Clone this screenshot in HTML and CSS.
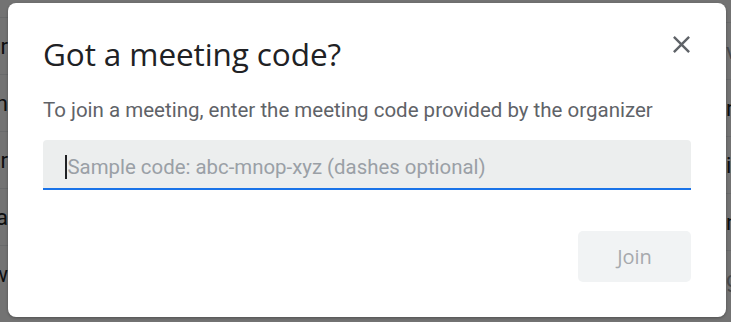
FILE: index.html
```html
<!DOCTYPE html>
<html>
<head>
<meta charset="utf-8">
<link rel="stylesheet" href="styles.css">
</head>
<body>
<div class="page">
  <div class="bg-col left">
    <div class="row">r</div>
    <div class="row">n</div>
    <div class="row">r</div>
    <div class="row">ta</div>
    <div class="row">w</div>
  </div>
  <div class="bg-col right">
    <div class="row faint">v</div>
    <div class="row">r</div>
    <div class="row">i</div>
    <div class="row">n</div>
    <div class="row faint">g</div>
  </div>
  <div class="overlay"></div>
  <div class="dialog">
    <div class="head">
      <h1 class="title">Got a meeting code?</h1>
      <button class="close" aria-label="Close">
        <svg width="24" height="24" viewBox="0 0 24 24"><path d="M19 6.41 17.59 5 12 10.59 6.41 5 5 6.41 10.59 12 5 17.59 6.41 19 12 13.41 17.59 19 19 17.59 13.41 12z" fill="#5f6368"/></svg>
      </button>
    </div>
    <p class="desc">To join a meeting, enter the meeting code provided by the organizer</p>
    <div class="field"><span class="caret"></span><span class="placeholder">Sample code: abc-mnop-xyz (dashes optional)</span></div>
    <div class="actions"><button class="join">Join</button></div>
  </div>
</div>
</body>
</html>
```
FILE: styles.css
```css
* { box-sizing: border-box; }
html, body { margin: 0; padding: 0; }
body { width: 731px; height: 322px; overflow: hidden; font-family: Roboto, "Liberation Sans", sans-serif; }
.page { position: relative; width: 731px; height: 322px; background: #ffffff; }
.bg-col { position: absolute; top: 0; display: flex; flex-direction: column; padding-top: 17px; font-size: 22px; color: #202124; }
.bg-col.left { left: -40px; width: 48px; text-align: right; }
.bg-col.right { left: 726px; width: 60px; padding-top: 22px; }
.bg-col .row { height: 57px; line-height: 57px; border-top: 1px solid #e8eaed; }
.bg-col .row.faint { color: #9aa0a6; }
.overlay { position: absolute; inset: 0; background: rgba(0,0,0,0.55); }
.dialog { position: absolute; left: 8px; top: 3px; width: 718px; height: 314px; background: #fff; border-radius: 8px; box-shadow: 0 1px 3px rgba(0,0,0,0.3); padding: 0 35px 0 35px; display: flex; flex-direction: column; }
.head { display: flex; justify-content: space-between; align-items: flex-start; }
.title { margin: 31px 0 0 0; font-family: "Open Sans", Roboto, sans-serif; font-weight: 400; font-size: 31.5px; line-height: 40px; color: #202124; letter-spacing: -0.1px; }
.close { margin: 21px -10px 0 0; width: 40px; height: 40px; border: 0; background: transparent; padding: 0; display: flex; align-items: center; justify-content: center; }
.close svg { width: 29px; height: 29px; }
.desc { margin: 23px 0 0 0; font-size: 20.5px; line-height: 26px; color: #5f6368; }
.field { margin-top: 17px; height: 50px; background: #eceeee; border-radius: 4px 4px 0 0; border-bottom: 2px solid #1a73e8; display: flex; align-items: center; padding: 5px 0 0 22px; }
.caret { width: 1.5px; height: 24px; background: #202124; margin-right: 1px; }
.placeholder { font-size: 20.4px; color: #9aa0a6; }
.actions { display: flex; justify-content: flex-end; margin-top: 41px; }
.join { width: 113px; height: 51px; border: 0; border-radius: 5px; background: #f1f3f4; color: #a6a9ad; font-family: "Open Sans", Roboto, sans-serif; font-size: 20px; }
```
